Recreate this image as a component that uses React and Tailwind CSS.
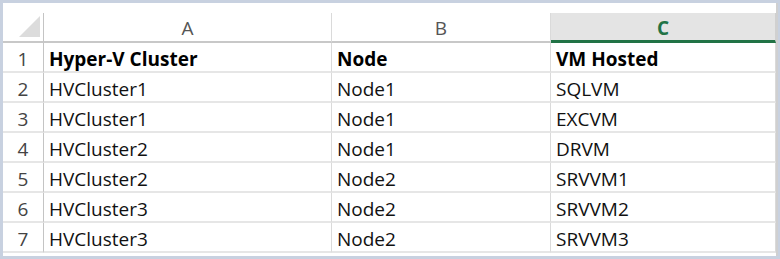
const rows = [
  ["Hyper-V Cluster", "Node", "VM Hosted"],
  ["HVCluster1", "Node1", "SQLVM"],
  ["HVCluster1", "Node1", "EXCVM"],
  ["HVCluster2", "Node1", "DRVM"],
  ["HVCluster2", "Node2", "SRVVM1"],
  ["HVCluster3", "Node2", "SRVVM2"],
  ["HVCluster3", "Node2", "SRVVM3"],
];

const cols = "grid grid-cols-[41px_288px_219px_225px]";

export default function App() {
  return (
    <div
      className="w-[780px] h-[259px] bg-[#c8d1e0] pt-[3px] pl-[3px] pb-[3px] pr-[2px] overflow-hidden"
      style={{ fontFamily: '"Open Sans", "Liberation Sans", sans-serif' }}
    >
      <div className="h-full bg-white border-r-2 border-[#d0d0d0] pt-[10px]">
        {/* Column headers */}
        <div className={`${cols} h-[30px] text-[19px] leading-[24px] text-[#555]`}>
          <div className="relative border-r border-[#c4c4c4] border-b-2 border-b-[#c8c8c8]">
            <svg className="absolute right-[3px] bottom-[4px]" width="21" height="21" viewBox="0 0 21 21">
              <polygon points="21,0 21,21 0,21" fill="#dcdcdc" />
            </svg>
          </div>
          <div className="flex items-center justify-center pt-[2px] border-r border-[#dadada] border-b-2 border-b-[#c8c8c8]">
            A
          </div>
          <div className="flex items-center justify-center pt-[2px] border-r border-[#dadada] border-b-2 border-b-[#c8c8c8]">
            B
          </div>
          <div className="flex items-center justify-center pt-[2px] bg-[#e4e4e4] border-r border-[#d0d0d0] border-b-[3px] border-b-[#217346] font-bold text-[#217346]">
            C
          </div>
        </div>

        {/* Rows */}
        {rows.map((row, i) => (
          <div key={i} className={`${cols} h-[30px] text-[19px] leading-[24px] text-[#111]`}>
            <div className="flex items-center justify-center pt-[3px] border-r border-[#c4c4c4] border-b-2 border-b-[#e6e6e6] text-[#444]">
              {i + 1}
            </div>
            {row.map((cell, j) => (
              <div
                key={j}
                className={`flex items-center pl-[5px] pt-[3px] border-r border-[#dadada] border-b-2 border-b-[#e6e6e6] ${
                  i === 0 ? "font-bold text-black" : ""
                }`}
              >
                {cell}
              </div>
            ))}
          </div>
        ))}
      </div>
    </div>
  );
}
